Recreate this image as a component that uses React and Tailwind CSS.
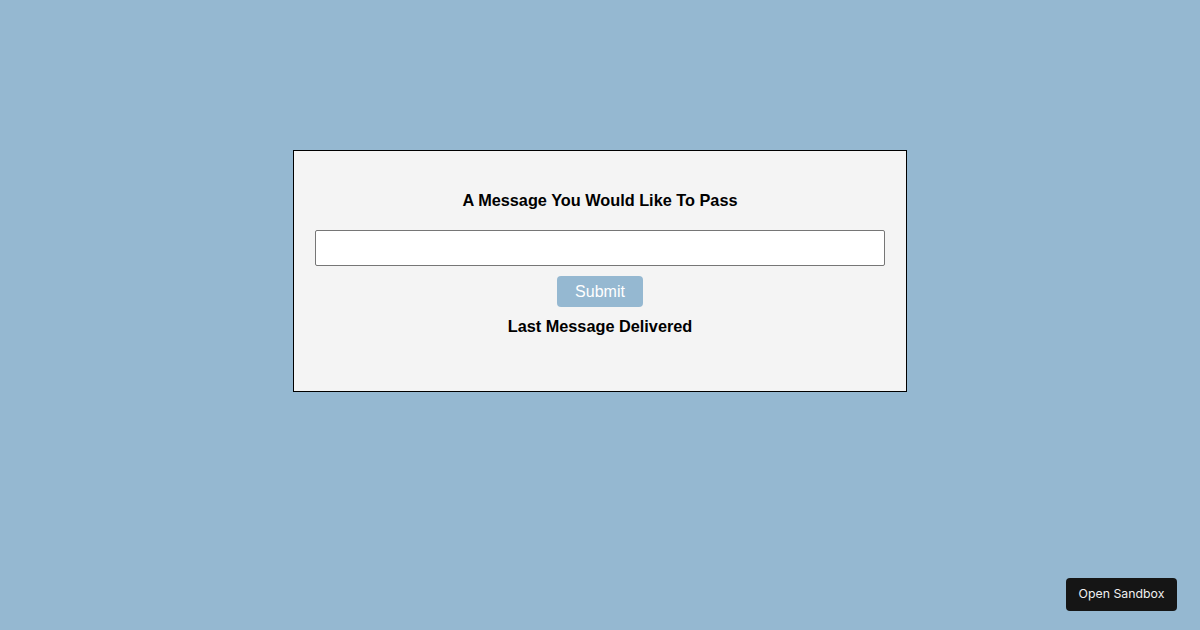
import React, { useState } from 'react'

const App = () => {
  const [message, setMessage] = useState('')
  const [lastMessage, setLastMessage] = useState('')

  const onSubmit = (e) => {
    e.preventDefault()
    setLastMessage(message)
    setMessage('')
  }

  return (
    <div className="relative min-h-[630px] w-full bg-[#95b8d1] font-['Liberation_Sans',Arial,sans-serif]">
      <div className="flex justify-center pt-[150px]">
        <form
          onSubmit={onSubmit}
          className="flex w-[614px] flex-col items-center border border-black bg-[#f4f4f4] px-[21px] pt-[40px] pb-[56px]"
        >
          <h3 className="text-[16.3px] leading-[18px] font-bold text-black">A Message You Would Like To Pass</h3>
          <input
            type="text"
            value={message}
            onChange={(e) => setMessage(e.target.value)}
            className="mt-[21px] h-[36px] w-full rounded-[2px] border border-[#767676] bg-white px-2 text-[16px] outline-none"
          />
          <button
            type="submit"
            className="mt-[10px] h-[31px] w-[86px] rounded-[4px] bg-[#95b8d1] text-[16px] text-white"
          >
            Submit
          </button>
          <h3 className="mt-[10px] text-[16.3px] leading-[18px] font-bold text-black">Last Message Delivered</h3>
          {lastMessage && <p className="mt-2 text-[16px] text-black">{lastMessage}</p>}
        </form>
      </div>
      <button className="absolute right-[23px] bottom-[19px] h-[33px] w-[111px] rounded-[4px] bg-[#151515] font-['Inter',sans-serif] text-[12.3px] text-[#f0f0f0]">
        Open Sandbox
      </button>
    </div>
  )
}

export default App
